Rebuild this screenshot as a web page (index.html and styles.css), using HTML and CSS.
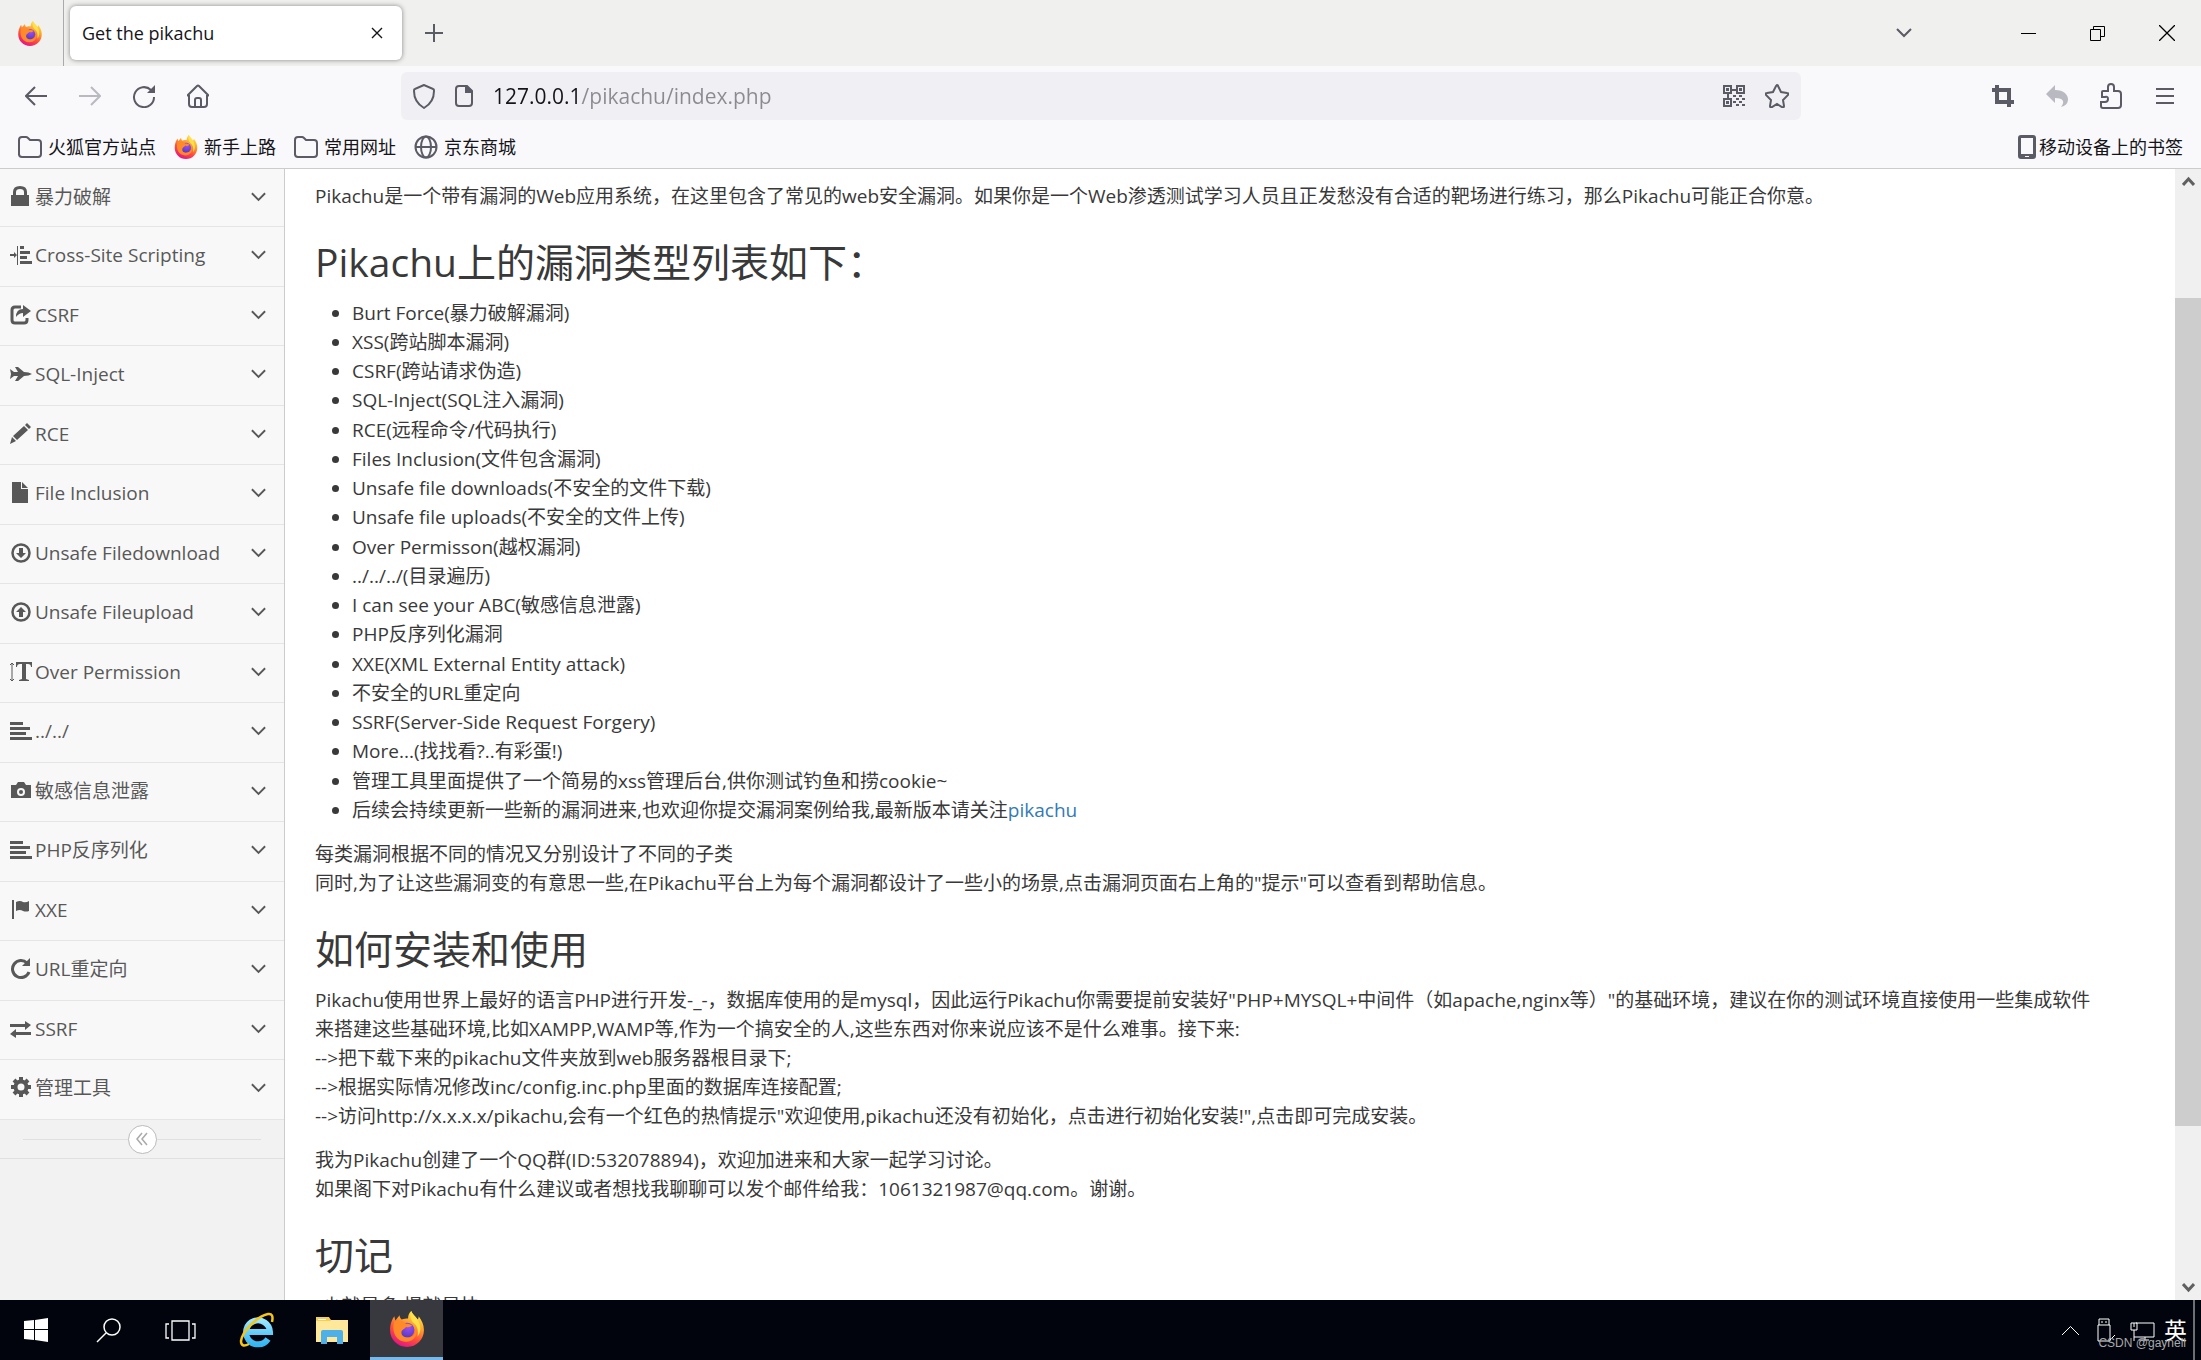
FILE: index.html
```
<!DOCTYPE html>
<html lang="zh-CN">
<head>
  <meta charset="UTF-8">
  <title>Get the pikachu</title>
  <link rel="stylesheet" href="styles.css">
</head>
<body>
  <svg class="sprite" aria-hidden="true">
    <defs>
      <linearGradient id="fox-body" x1="0.8" y1="0" x2="0.3" y2="1">
        <stop offset="0" stop-color="#fff44f"/>
        <stop offset="0.35" stop-color="#ffa22e"/>
        <stop offset="0.65" stop-color="#ff4f3b"/>
        <stop offset="1" stop-color="#e3108a"/>
      </linearGradient>
      <radialGradient id="fox-globe" cx="0.6" cy="0.3" r="0.8">
        <stop offset="0" stop-color="#a04cf5"/>
        <stop offset="1" stop-color="#4a3bb8"/>
      </radialGradient>
      <linearGradient id="ie-blue" x1="0" y1="0" x2="0" y2="1">
        <stop offset="0" stop-color="#9be7ff"/>
        <stop offset="1" stop-color="#35b5f2"/>
      </linearGradient>
    </defs>
    <symbol id="i-firefox" viewBox="0 0 32 34">
      <path d="M20 0c1 3 4 5 6 8 1-1 1-2 1-3 3 4 5 8 5 13 0 9-7 16-16 16S0 27 0 18C0 12 2 8 4 5l1 4 4-5c0 2 1 3 2 4 2-1 4-1 6-1 0-3 1-5 3-7z" fill="url(#fox-body)"/>
      <circle cx="16" cy="18" r="7" fill="url(#fox-globe)"/>
      <path d="M4 10c4-2 8-1 11 2 2 0 4 0 6 2-2 1-4 2-6 1-1 2-3 2-4 4-1 3 1 6 5 6 6 0 9-4 8-10 3 7-1 14-9 14C6 29 1 20 4 10z" fill="#ff8a2a"/>
      <path d="M20 0c1 3 4 5 6 8 3 5 4 11 0 16 1-6 0-10-4-13-3-3-3-7-2-11z" fill="#ffe04a"/>
    </symbol>
    <symbol id="i-chev" viewBox="0 0 18 12"><path d="M2 2l7 7 7-7" fill="none" stroke="currentColor" stroke-width="2"/></symbol>
    <symbol id="i-folder" viewBox="0 0 24 24"><path d="M1 20V5q0-3 3-3h4q1 0 2 1l2 2h8q3 0 3 3v11q0 3-3 3H4q-3 0-3-3z" fill="none" stroke="currentColor" stroke-width="2"/></symbol>
    <symbol id="i-list" viewBox="0 0 22 20"><path d="M0 1h13v3H0zM0 6h20v3H0zM0 11h16v3H0zM0 16h22v3H0z"/></symbol>
  </svg>

  <header class="browser">
    <div class="tab-strip">
      <div class="pinned"><svg class="fox-small"><use href="#i-firefox"/></svg></div>
      <div class="tab">
        <span>Get the pikachu</span>
        <button aria-label="关闭标签页"><svg width="12" height="12" viewBox="0 0 12 12" fill="none" stroke="#15141a" stroke-width="1.4"><path d="M1 1l10 10M11 1L1 11"/></svg></button>
      </div>
      <button class="new-tab" aria-label="新建标签页"><svg width="18" height="18" viewBox="0 0 18 18" fill="none" stroke="#5b5b66" stroke-width="2"><path d="M9 0v18M0 9h18"/></svg></button>
      <div class="window-controls">
        <button class="all-tabs" aria-label="列出所有标签页"><svg width="18" height="12" class="grey"><use href="#i-chev"/></svg></button>
        <button aria-label="最小化"><svg width="15" height="15" viewBox="0 0 15 15" stroke="#000"><path d="M0 7.5h15"/></svg></button>
        <button aria-label="还原"><svg width="15" height="15" viewBox="0 0 15 15" fill="none" stroke="#000"><path d="M.5 3.5h10v11H.5zM3.5 3.5v-3h11v10h-4"/></svg></button>
        <button aria-label="关闭"><svg width="16" height="16" viewBox="0 0 16 16" fill="none" stroke="#000" stroke-width="1.3"><path d="M0 0l16 16M16 0L0 16"/></svg></button>
      </div>
    </div>

    <div class="nav-bar">
      <div class="nav-left">
        <button aria-label="后退"><svg width="22" height="20" viewBox="0 0 22 20"><path d="M22 10H2M10 1l-9 9 9 9"/></svg></button>
        <button class="off" aria-label="前进"><svg width="22" height="20" viewBox="0 0 22 20"><path d="M0 10h20M12 1l9 9-9 9"/></svg></button>
        <button aria-label="刷新"><svg width="24" height="24" viewBox="0 0 24 24"><path d="M22 13a10 10 0 1 1-3-7"/><path d="M23 1v8h-8z" fill="currentColor" stroke="none"/></svg></button>
        <button aria-label="主页"><svg width="22" height="24" viewBox="0 0 22 24"><path d="M0 12L10 2q1-1 2 0l10 10M2 11v9q0 3 3 3h12q3 0 3-3v-9M8 23v-7q0-2 2-2h2q2 0 2 2v7"/></svg></button>
      </div>
      <div class="url-bar">
        <svg width="22" height="25" viewBox="0 0 22 25"><path d="M11 1L2 5q-1 0-1 2c0 8 3 13 10 17 7-4 10-9 10-17q0-2-1-2z"/></svg>
        <svg width="18" height="22" viewBox="0 0 18 22"><path d="M1 4q0-3 3-3h7l6 6v11q0 3-3 3H4q-3 0-3-3z"/><path d="M11 0l7 7h-7z" fill="currentColor"/></svg>
        <input class="url" type="text" aria-label="地址" value="127.0.0.1/pikachu/index.php">
        <svg width="22" height="22" viewBox="0 0 22 22"><path d="M1 1h7v7H1zM14 1h7v7h-7zM1 14h7v7H1zM8 5h6M5 8v6"/><path d="M4 4h1v1H4zM17 4h1v1h-1zM4 17h1v1H4z"/><path d="M10 11h12M10 17h12" stroke-dasharray="3 3"/><path d="M13 14h9M13 20h9" stroke-dasharray="3 3"/></svg>
        <svg width="24" height="24" viewBox="0 0 24 24"><path d="M12 1q1 0 1 1l3 6 6 1q2 0 1 2l-5 5 1 6q0 2-2 1l-5-3-5 3q-2 1-2-1l1-6-5-5q-1-2 1-2l6-1 3-6q1-1 1-1z"/></svg>
      </div>
      <div class="nav-right">
        <button aria-label="截图"><svg width="22" height="22" viewBox="0 0 22 22"><path d="M0 5h17v17M5 0v17h17" stroke-width="4"/></svg></button>
        <button class="off" aria-label="撤销"><svg width="22" height="22" viewBox="0 0 22 22"><path d="M0 9L9 0v5c9 0 13 5 13 9 0 5-3 7-7 8 4-5 3-9-6-9v5z" fill="currentColor" stroke="none"/></svg></button>
        <button aria-label="扩展"><svg width="22" height="26" viewBox="0 0 22 26"><path d="M2 14V9q0-1 1-1h5V4q0-3 3-3t3 3v4h4q3 0 3 3v11q0 3-3 3H3q-2 0-2-2v-4h4q3 0 3-3t-3-2z"/></svg></button>
        <button aria-label="菜单"><svg width="18" height="16" viewBox="0 0 18 16"><path d="M0 1h18M0 8h18M0 15h18"/></svg></button>
      </div>
    </div>

    <nav class="bookmarks" aria-label="书签">
      <a href="#"><svg><use href="#i-folder"/></svg>火狐官方站点</a>
      <a href="#"><svg><use href="#i-firefox"/></svg>新手上路</a>
      <a href="#"><svg><use href="#i-folder"/></svg>常用网址</a>
      <a href="#"><svg viewBox="0 0 24 24" fill="none" stroke="currentColor" stroke-width="2"><circle cx="12" cy="12" r="10.5"/><ellipse cx="12" cy="12" rx="5" ry="10.5"/><path d="M2 12h20"/></svg>京东商城</a>
      <a class="mobile" href="#"><svg viewBox="0 0 18 24"><path d="M3 0h12q3 0 3 3v18q0 3-3 3H3q-3 0-3-3V3q0-3 3-3zm0 3v16h12V3zm4 18v1h4v-1z" fill="currentColor" fill-rule="evenodd"/></svg>移动设备上的书签</a>
    </nav>
  </header>

  <div class="page">
    <aside class="sidebar">
      <ul class="menu">
        <li><a href="#"><svg viewBox="0 0 22 22"><path d="M1 9h2V6q0-6 7-6t7 6v3h2v11H1zm5 0h8V6q0-3-4-3T6 6z" fill-rule="evenodd"/></svg><span>暴力破解</span><svg class="arrow"><use href="#i-chev"/></svg></a></li>
        <li><a href="#"><svg viewBox="0 0 22 22"><path d="M0 10h4V8l3 3-3 3v-2H0zM7 2h1v19H7zM10 2h4v3h-4zM10 7h10v3H10zM10 12h7v3h-7zM10 17h12v3H10z"/></svg><span>Cross-Site Scripting</span><svg class="arrow"><use href="#i-chev"/></svg></a></li>
        <li><a href="#"><svg viewBox="0 0 22 22"><path d="M11 3H5q-3 0-3 3v10q0 3 3 3h9q3 0 3-3v-2" fill="none" stroke="currentColor" stroke-width="3"/><path d="M13 1l8 6-8 6V9q-4 0-7 4 0-8 7-8z"/></svg><span>CSRF</span><svg class="arrow"><use href="#i-chev"/></svg></a></li>
        <li><a href="#"><svg viewBox="0 0 22 22"><path d="M0 6l4 3h4L5 4h3l6 5q5 0 8 2-3 2-8 2l-6 5H5l3-5H4l-4 3 1-5z"/></svg><span>SQL-Inject</span><svg class="arrow"><use href="#i-chev"/></svg></a></li>
        <li><a href="#"><svg viewBox="0 0 22 22"><path d="M0 21l2-7 4 4zM3 13L14 3l4 4L7 17zM15 2l2-2 4 4-2 2z"/></svg><span>RCE</span><svg class="arrow"><use href="#i-chev"/></svg></a></li>
        <li><a href="#"><svg viewBox="0 0 22 22"><path d="M2 0h9v7h7v14H2zM12 0l6 6h-6z"/></svg><span>File Inclusion</span><svg class="arrow"><use href="#i-chev"/></svg></a></li>
        <li><a href="#"><svg viewBox="0 0 22 22"><circle cx="11" cy="11" r="8.5" fill="none" stroke="currentColor" stroke-width="2.5"/><path d="M9 6h4v5h3l-5 5-5-5h3z"/></svg><span>Unsafe Filedownload</span><svg class="arrow"><use href="#i-chev"/></svg></a></li>
        <li><a href="#"><svg viewBox="0 0 22 22"><circle cx="11" cy="11" r="8.5" fill="none" stroke="currentColor" stroke-width="2.5"/><path d="M9 16h4v-5h3l-5-5-5 5h3z"/></svg><span>Unsafe Fileupload</span><svg class="arrow"><use href="#i-chev"/></svg></a></li>
        <li><a href="#"><svg viewBox="0 0 22 22"><path d="M2 3v16M0 4l2-2 2 2M0 18l2 2 2-2" fill="none" stroke="currentColor"/><path d="M6 1h16v5h-1q0-3-3-3h-2v15l3 1v1H9v-1l3-1V3h-2q-3 0-3 3H6z"/></svg><span>Over Permission</span><svg class="arrow"><use href="#i-chev"/></svg></a></li>
        <li><a href="#"><svg><use href="#i-list"/></svg><span>../../</span><svg class="arrow"><use href="#i-chev"/></svg></a></li>
        <li><a href="#"><svg viewBox="0 0 22 22"><path d="M1 5h5l2-3h6l2 3h5v13H1zm10 3a4 4 0 1 0 0 8 4 4 0 1 0 0-8z" fill-rule="evenodd"/><circle cx="11" cy="12" r="2"/></svg><span>敏感信息泄露</span><svg class="arrow"><use href="#i-chev"/></svg></a></li>
        <li><a href="#"><svg><use href="#i-list"/></svg><span>PHP反序列化</span><svg class="arrow"><use href="#i-chev"/></svg></a></li>
        <li><a href="#"><svg viewBox="0 0 22 22"><path d="M2 1h2v19H2zM6 3q4-2 7 0 3 1 6-1v10q-3 1-6 0-3-2-7 0z"/></svg><span>XXE</span><svg class="arrow"><use href="#i-chev"/></svg></a></li>
        <li><a href="#"><svg viewBox="0 0 22 22"><path d="M19 14a8.500 8.500 0 1 1-2-9" fill="none" stroke="currentColor" stroke-width="3"/><path d="M20 0v8h-8z"/></svg><span>URL重定向</span><svg class="arrow"><use href="#i-chev"/></svg></a></li>
        <li><a href="#"><svg viewBox="0 0 22 22"><path d="M0 6h15V3l6 4-6 5V9H0zM21 14H6v-3l-6 5 6 4v-3h15z"/></svg><span>SSRF</span><svg class="arrow"><use href="#i-chev"/></svg></a></li>
        <li><a href="#"><svg viewBox="0 0 22 22"><circle cx="11" cy="10" r="5.500" fill="none" stroke="currentColor" stroke-width="4"/><path d="M11 0v4M11 16v4M1 10h4M17 10h4M4 3l3 3M15 14l3 3M18 3l-3 3M7 14l-3 3" stroke="currentColor" stroke-width="4"/></svg><span>管理工具</span><svg class="arrow"><use href="#i-chev"/></svg></a></li>
      </ul>
      <div class="collapse">
        <button aria-label="收起菜单"><svg width="12" height="14" viewBox="0 0 12 14" fill="none" stroke="#aaa" stroke-width="1.5"><path d="M6 1L1 7l5 6M11 1L6 7l5 6"/></svg></button>
      </div>
    </aside>

    <main class="content">
      <p>Pikachu是一个带有漏洞的Web应用系统，在这里包含了常见的web安全漏洞。如果你是一个Web渗透测试学习人员且正发愁没有合适的靶场进行练习，那么Pikachu可能正合你意。</p>

      <h1>Pikachu上的漏洞类型列表如下：</h1>
      <ul class="vulns">
        <li>Burt Force(暴力破解漏洞)</li>
        <li>XSS(跨站脚本漏洞)</li>
        <li>CSRF(跨站请求伪造)</li>
        <li>SQL-Inject(SQL注入漏洞)</li>
        <li>RCE(远程命令/代码执行)</li>
        <li>Files Inclusion(文件包含漏洞)</li>
        <li>Unsafe file downloads(不安全的文件下载)</li>
        <li>Unsafe file uploads(不安全的文件上传)</li>
        <li>Over Permisson(越权漏洞)</li>
        <li>../../../(目录遍历)</li>
        <li>I can see your ABC(敏感信息泄露)</li>
        <li>PHP反序列化漏洞</li>
        <li>XXE(XML External Entity attack)</li>
        <li>不安全的URL重定向</li>
        <li>SSRF(Server-Side Request Forgery)</li>
        <li>More...(找找看?..有彩蛋!)</li>
        <li>管理工具里面提供了一个简易的xss管理后台,供你测试钓鱼和捞cookie~</li>
        <li>后续会持续更新一些新的漏洞进来,也欢迎你提交漏洞案例给我,最新版本请关注<a href="#">pikachu</a></li>
      </ul>

      <p>
        每类漏洞根据不同的情况又分别设计了不同的子类<br>
        同时,为了让这些漏洞变的有意思一些,在Pikachu平台上为每个漏洞都设计了一些小的场景,点击漏洞页面右上角的"提示"可以查看到帮助信息。
      </p>

      <h1>如何安装和使用</h1>
      <p>
        Pikachu使用世界上最好的语言PHP进行开发-_-，数据库使用的是mysql，因此运行Pikachu你需要提前安装好"PHP+MYSQL+中间件（如apache,nginx等）"的基础环境，建议在你的测试环境直接使用一些集成软件来搭建这些基础环境,比如XAMPP,WAMP等,作为一个搞安全的人,这些东西对你来说应该不是什么难事。接下来:<br>
        --&gt;把下载下来的pikachu文件夹放到web服务器根目录下;<br>
        --&gt;根据实际情况修改inc/config.inc.php里面的数据库连接配置;<br>
        --&gt;访问http://x.x.x.x/pikachu,会有一个红色的热情提示"欢迎使用,pikachu还没有初始化，点击进行初始化安装!",点击即可完成安装。
      </p>
      <p>
        我为Pikachu创建了一个QQ群(ID:532078894)，欢迎加进来和大家一起学习讨论。<br>
        如果阁下对Pikachu有什么建议或者想找我聊聊可以发个邮件给我：1061321987@qq.com。谢谢。
      </p>

      <h1>切记</h1>
      <p>"少就是多,慢就是快"</p>
    </main>

    <div class="scrollbar">
      <svg width="13" height="11" viewBox="0 0 13 11"><path d="M1 9l5.500-6L12 9" fill="none" stroke="#606060" stroke-width="3"/></svg>
      <div class="track"><div class="thumb"></div></div>
      <svg width="13" height="11" viewBox="0 0 13 11"><path d="M1 2l5.500 6L12 2" fill="none" stroke="#606060" stroke-width="3"/></svg>
    </div>
  </div>

  <footer class="taskbar">
    <button aria-label="开始"><svg width="24" height="24" viewBox="0 0 24 24" fill="#fff"><path d="M0 3l10-1v9H0zM11 2l13-2v11H11zM0 12h10v10L0 21zM11 12h13v12l-13-2z"/></svg></button>
    <button aria-label="搜索"><svg width="25" height="25" viewBox="0 0 25 25" fill="none" stroke="#fff" stroke-width="1.5"><circle cx="16" cy="9" r="8"/><path d="M10 15l-9 9"/></svg></button>
    <button aria-label="任务视图"><svg width="31" height="21" viewBox="0 0 31 21" fill="none" stroke="#fff" stroke-width="1.300"><path d="M7 1h17v19H7zM4 4H1v14h3M27 4h3v14h-3"/></svg></button>
    <div class="apps">
      <button aria-label="Internet Explorer"><svg width="36" height="36" viewBox="0 0 36 36" fill="none"><path d="M10 20h21a12 12 0 1 0-2 7" stroke="url(#ie-blue)" stroke-width="6"/><path d="M33 10q2-9-4-8C18 4 3 20 2 29q0 7 8 3" stroke="#f5c518" stroke-width="2.500"/></svg></button>
      <button aria-label="文件资源管理器"><svg width="32" height="27" viewBox="0 0 32 27"><path d="M0 2q0-2 2-2h10l3 3h17v22H0z" fill="#ffe89a"/><path d="M0 0h13l2 4H0z" fill="#f8ce52"/><path d="M2 2h8v1H2z" fill="#fff"/><path d="M5 27V15q0-2 2-2h18q2 0 2 2v12h-6v-7H11v7z" fill="#4db0e8"/></svg></button>
      <button class="running" aria-label="Firefox"><svg width="34" height="36"><use href="#i-firefox"/></svg></button>
    </div>
    <div class="tray">
      <button aria-label="显示隐藏的图标"><svg width="19" height="11" viewBox="0 0 19 11"><path d="M1 10l8.500-8.500L18 10"/></svg></button>
      <button aria-label="安全删除硬件"><svg width="19" height="25" viewBox="0 0 19 25"><path d="M2 7V1h10v6M1 7h12v16H1zM4 4h2M8 4h2M13 22l5-5"/></svg></button>
      <button aria-label="网络"><svg width="25" height="22" viewBox="0 0 25 22"><path d="M6 4h18v14H4v4M1 4h6v7H1zM4 4v4M4 11v7M15 18v3M9 21h10"/></svg></button>
      <span class="ime">英</span>
    </div>
    <span class="watermark">CSDN @gaynell</span>
  </footer>
</body>
</html>
```

FILE: styles.css
```
* {
  box-sizing: border-box;
}

body {
  margin: 0;
  height: 100vh;
  display: flex;
  flex-direction: column;
  overflow: hidden;
  font-family: "Open Sans", "Noto Sans CJK SC", sans-serif;
  font-size: 19px;
  line-height: 29px;
  color: #393939;
  background: #fff;
}

button {
  padding: 0;
  border: 0;
  background: none;
  font: inherit;
  color: inherit;
  display: flex;
  align-items: center;
  justify-content: center;
}

a {
  color: #337ab7;
  text-decoration: none;
}

svg {
  display: block;
  flex: none;
}

.sprite {
  position: absolute;
  width: 0;
  height: 0;
}

/* browser window */
.browser {
  flex: none;
  background: #f9f9fb;
  border-bottom: 1px solid #cccccc;
  font-size: 18px;
  color: #15141a;
}

.tab-strip {
  display: flex;
  align-items: center;
  height: 66px;
  background: #f0f0ee;
}

.pinned {
  display: flex;
  align-items: center;
  width: 64px;
  height: 66px;
  padding-left: 18px;
  border-right: 1px solid #aaaaaa;
}

.fox-small {
  width: 24px;
  height: 25px;
}

.tab {
  display: flex;
  align-items: center;
  justify-content: space-between;
  width: 332px;
  height: 54px;
  margin-left: 6px;
  padding: 0 19px 0 12px;
  border-radius: 6px;
  background: #fff;
  box-shadow: 0 0 5px rgba(0, 0, 0, 0.45);
}

.new-tab {
  width: 64px;
  height: 48px;
}

.window-controls {
  display: flex;
  margin-left: auto;
}

.window-controls button {
  width: 69px;
  height: 66px;
}

.window-controls .all-tabs {
  margin-right: 56px;
}

.grey {
  color: #5b5b66;
}

.nav-bar {
  display: flex;
  align-items: center;
  justify-content: space-between;
  height: 60px;
  padding: 0 9px;
}

.nav-left,
.nav-right {
  display: flex;
  color: #5b5b66;
}

.nav-left {
  width: 392px;
}

.nav-bar button {
  width: 54px;
  height: 48px;
}

.nav-bar svg {
  fill: none;
  stroke: currentColor;
  stroke-width: 2;
}

.nav-bar .off {
  color: #b9b9c1;
}

.url-bar {
  display: flex;
  align-items: center;
  gap: 20px;
  flex: 1;
  max-width: 1400px;
  height: 48px;
  margin-right: auto;
  padding: 0 12px;
  border-radius: 6px;
  background: #f0f0f4;
  color: #5b5b66;
}

/* host part dark, path part grey */
.url {
  flex: 1;
  min-width: 0;
  height: 36px;
  padding: 0;
  border: 0;
  outline: 0;
  font-family: inherit;
  font-size: 21px;
  color: transparent;
  background: linear-gradient(90deg, #15141a 89px, #8a8a90 89px);
  -webkit-background-clip: text;
  background-clip: text;
}

.bookmarks {
  display: flex;
  align-items: center;
  gap: 18px;
  height: 42px;
  padding: 0 18px;
}

.bookmarks a {
  display: flex;
  align-items: center;
  gap: 6px;
  color: #15141a;
}

.bookmarks svg {
  width: 24px;
  height: 24px;
  color: #5b5b66;
}

.bookmarks .mobile {
  margin-left: auto;
  gap: 3px;
}

.bookmarks .mobile svg {
  width: 18px;
}

/* page */
.page {
  flex: 1;
  display: flex;
  min-height: 0;
}

.sidebar {
  flex: none;
  width: 285px;
  background: #f2f2f2;
  border-right: 1px solid #cccccc;
}

.menu {
  margin: 0;
  padding: 0;
  list-style: none;
}

.menu li {
  height: 59px;
  border-bottom: 1px solid #e5e5e5;
  background: #f8f8f8;
}

.menu li:first-child {
  height: 58px;
}

.menu li:nth-child(even) {
  height: 60px;
}

.menu a {
  display: flex;
  align-items: center;
  gap: 3px;
  height: 56px;
  padding: 0 17px 0 10px;
  color: #585858;
}

.menu svg {
  width: 22px;
  height: 22px;
  fill: currentColor;
}

.menu span {
  flex: 1;
  white-space: nowrap;
}

.menu .arrow {
  width: 17px;
  height: 12px;
}

.collapse {
  display: flex;
  align-items: center;
  height: 39px;
  padding: 0 23px;
  border-bottom: 1px solid #e0e0e0;
}

.collapse::before,
.collapse::after {
  content: "";
  flex: 1;
  height: 1px;
  background: #e0e0e0;
}

.collapse button {
  width: 29px;
  height: 29px;
  border: 1px solid #bbbbbb;
  border-radius: 50%;
  background: #fff;
}

.content {
  flex: 1;
  min-width: 0;
  padding: 13px 70px 0 30px;
}

.content p {
  margin: 0 0 15px;
}

.content h1 {
  margin: 27px 0 14px;
  font-size: 39px;
  font-weight: 400;
  line-height: 47px;
}

.vulns {
  margin: 0 0 15px;
  padding-left: 37px;
}

.vulns li:nth-child(4n) {
  padding-bottom: 1px;
}

.scrollbar {
  flex: none;
  display: flex;
  flex-direction: column;
  align-items: center;
  width: 26px;
  padding: 7px 0;
  background: #f0f0f0;
}

.track {
  flex: 1;
  width: 100%;
  padding-top: 111px;
}

.thumb {
  height: 828px;
  background: #cdcdcd;
}

/* taskbar */
.taskbar {
  position: relative;
  flex: none;
  display: flex;
  height: 60px;
  background: #01040d;
  color: #fff;
}

.taskbar button {
  width: 72px;
  height: 60px;
}

.apps {
  display: flex;
  gap: 2px;
  margin-left: 4px;
}

.apps button {
  width: 73px;
}

.taskbar .running {
  background: #38393e;
  border-bottom: 3px solid #76b9ed;
}

.tray {
  display: flex;
  align-items: center;
  margin-left: auto;
  margin-right: 6px;
  padding-right: 6px;
  border-right: 2px solid #6d6f74;
}

.tray button {
  width: 36px;
}

.tray svg {
  fill: none;
  stroke: currentColor;
}

.ime {
  margin-left: 4px;
  font-size: 23px;
}

.watermark {
  position: absolute;
  right: 15px;
  bottom: 2px;
  font-family: "Liberation Sans", sans-serif;
  font-size: 12px;
  color: #a8a9ac;
}
```
